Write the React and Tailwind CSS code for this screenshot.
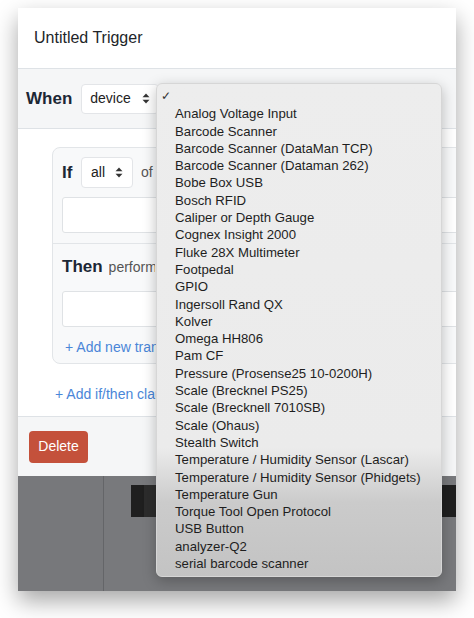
import React from 'react';

const devices = [
    "Analog Voltage Input",
    "Barcode Scanner",
    "Barcode Scanner (DataMan TCP)",
    "Barcode Scanner (Dataman 262)",
    "Bobe Box USB",
    "Bosch RFID",
    "Caliper or Depth Gauge",
    "Cognex Insight 2000",
    "Fluke 28X Multimeter",
    "Footpedal",
    "GPIO",
    "Ingersoll Rand QX",
    "Kolver",
    "Omega HH806",
    "Pam CF",
    "Pressure (Prosense25 10-0200H)",
    "Scale (Brecknel PS25)",
    "Scale (Brecknell 7010SB)",
    "Scale (Ohaus)",
    "Stealth Switch",
    "Temperature / Humidity Sensor (Lascar)",
    "Temperature / Humidity Sensor (Phidgets)",
    "Temperature Gun",
    "Torque Tool Open Protocol",
    "USB Button",
    "analyzer-Q2",
    "serial barcode scanner",
];

// little up/down caret used by the native-looking selects
const Carets = () => (
    <svg width="8" height="11" viewBox="0 0 8 11" className="shrink-0">
        <path d="M4 0.5 L7.5 4.3 H0.5 Z" fill="#333" />
        <path d="M4 10.5 L7.5 6.7 H0.5 Z" fill="#333" />
    </svg>
);

const Select = ({ label, className }) => (
    <div className={`flex items-center justify-between bg-white border border-[#e3e5e8] rounded-[4px] ${className}`}>
        <span className="text-[14px] text-[#222]">{label}</span>
        <Carets />
    </div>
);

// open popup of the trigger select, it sits over the dialog
const DeviceMenu = () => (
    <div className="absolute left-[138px] top-[75px] w-[286px] h-[494px] rounded-[6px] pt-[4px] shadow-[0_4px_14px_rgba(0,0,0,0.25)] border border-[#d6d6d6] bg-[linear-gradient(to_bottom,#ededed_0%,#ebebeb_74%,#cbcbcb_85%,#c3c3c3_100%)] text-[13.2px] leading-[17.3px] text-[#1e1e1e]">
        <div className="h-[17.3px] pl-[4px] text-[12px] text-[#333]">✓</div>
        {devices.map((d) => (
            <div key={d} className="pl-[18px] whitespace-nowrap">{d}</div>
        ))}
    </div>
);

// text that runs under the popup is cut where the popup starts
const Clipped = ({ w, className, children }) => (
    <div className={`overflow-hidden whitespace-nowrap shrink-0 ${w} ${className}`}>{children}</div>
);

export default function App() {
    return (
        <div className="w-[474px] h-[618px] bg-white pt-[8px] pl-[18px] font-['Liberation_Sans',Arial,sans-serif]">
            <div className="relative w-[438px] h-[583px] flex flex-col overflow-hidden shadow-[0_10px_22px_rgba(0,0,0,0.35)]">
                {/* header */}
                <div className="h-[61px] shrink-0 flex items-center pl-[16px] bg-white border-b border-[#dee2e6]">
                    <span className="text-[16px] text-[#212529]">Untitled Trigger</span>
                </div>

                {/* when row */}
                <div className="h-[60px] shrink-0 flex items-center pl-[8px] gap-[9px] bg-[#f5f6f7] border-b border-[#dee2e6]">
                    <span className="text-[17px] font-bold text-[#1c2735]">When</span>
                    <Select label="device" className="w-[78px] h-[30px] px-[8px]" />
                    <div className="w-[271px] h-[30px] bg-white border border-[#7ea6e6] rounded-[4px]" />
                </div>

                {/* clause body */}
                <div className="h-[287px] shrink-0 bg-white pt-[18px] pl-[34px]">
                    <div className="w-[420px] h-[217px] border border-[#e2e5e8] rounded-[8px] bg-[#f8f9fa] flex flex-col">
                        <div className="flex items-center gap-[8px] pl-[9px] pt-[9px]">
                            <span className="text-[17px] font-bold text-[#1c2735] w-[11px]">If</span>
                            <Select label="all" className="w-[52px] h-[31px] px-[9px]" />
                            <Clipped w="w-[15px]" className="text-[14px] text-[#555]">of the following conditions</Clipped>
                        </div>
                        <div className="ml-[9px] mt-[9px] h-[36px] bg-white border border-[#dfe2e5] rounded-[3px]" />
                        <div className="mt-[10px] border-t border-[#e2e5e8]" />
                        <div className="flex items-baseline gap-[6px] pl-[9px] pt-[10px]">
                            <span className="text-[17px] font-bold text-[#1c2735]">Then</span>
                            <Clipped w="w-[46px]" className="text-[14px] text-[#555]">perform the following actions</Clipped>
                        </div>
                        <div className="ml-[9px] mt-[11px] h-[36px] bg-white border border-[#dfe2e5] rounded-[3px]" />
                        <Clipped w="w-[104px]" className="pl-[12px] mt-[10px] text-[14px] text-[#4a86d8]">+ Add new transition</Clipped>
                    </div>
                    <Clipped w="w-[104px]" className="pl-[3px] mt-[20px] text-[14px] text-[#4a86d8]">+ Add if/then clause</Clipped>
                </div>

                {/* footer */}
                <div className="h-[60px] shrink-0 flex items-center pl-[11px] bg-[#f5f6f7] border-t border-[#dee2e6]">
                    <button className="w-[59px] h-[32px] rounded-[4px] bg-[#c4513b] text-white text-[14px]">Delete</button>
                </div>

                {/* dimmed app behind the dialog */}
                <div className="flex-1 grid grid-cols-[86px_1fr] bg-[#78797c]">
                    <div className="border-r border-[#646568] bg-[#77787b]" />
                    <div className="pt-[9px] pl-[27px] bg-[#78797c]">
                        <div className="h-[32px] bg-[#1f1f1f] flex">
                            <div className="w-[13px]" />
                            <div className="w-[14px] bg-[#2c2c2c]" />
                        </div>
                    </div>
                </div>

                <DeviceMenu />
            </div>
        </div>
    );
}
